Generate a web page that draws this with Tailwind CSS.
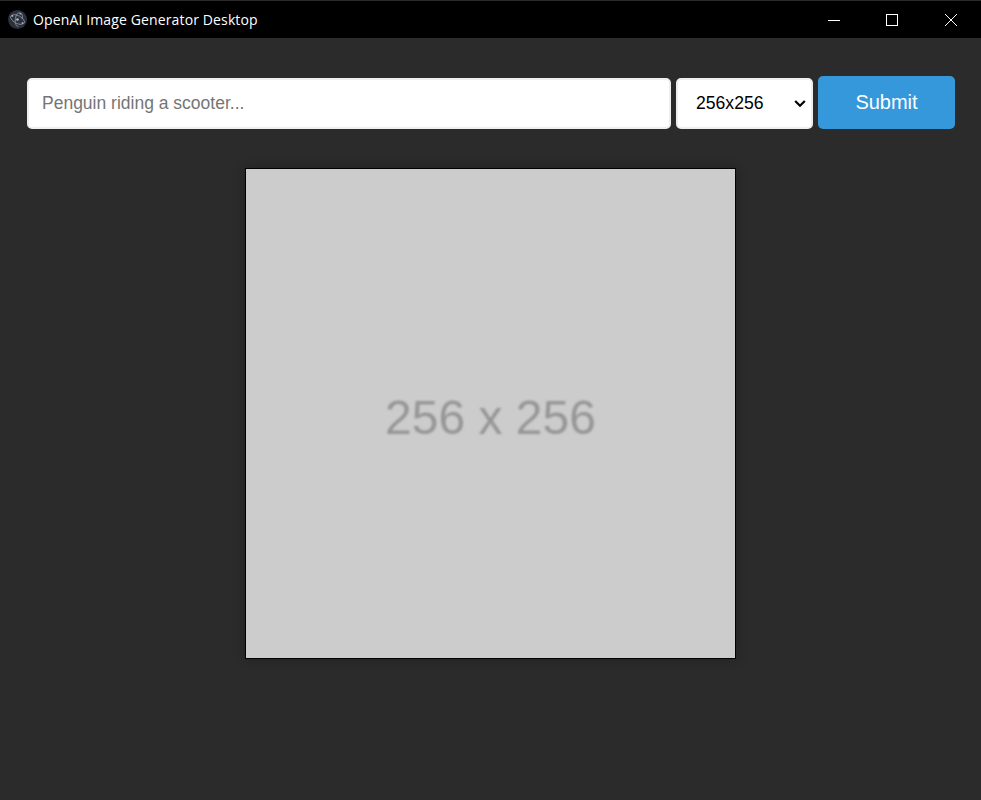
<!DOCTYPE html>
<html lang="en">
<head>
    <meta charset="UTF-8">
    <title>OpenAI Image Generator Desktop</title>
    <script src="https://cdn.jsdelivr.net/npm/@tailwindcss/browser@4"></script>
</head>
<body class="bg-[#2b2b2b] h-[800px] overflow-hidden font-['Liberation_Sans',sans-serif]">
    <!-- title bar -->
    <div class="h-[38px] bg-black border-t border-[#2b2b2b] flex items-center">
        <svg class="ml-[8px] mr-[6px] w-[19px] h-[19px]" viewBox="0 0 20 20" fill="none">
            <circle cx="10" cy="10" r="10" fill="#2b303b"/>
            <g stroke="#8d98a6" stroke-width="0.9">
                <path d="M5.2 6.2C3.2 5.9 2.2 6.4 2.6 7.8C3.2 10 6.5 13.4 10.4 14.6C13.6 15.6 16 15.2 15.9 13.7"/>
                <path d="M14.8 13.8C16.8 14.1 17.8 13.6 17.4 12.2C16.8 10 13.5 6.6 9.6 5.4C6.4 4.4 4 4.8 4.1 6.3"/>
                <path d="M13.6 4.7C12.9 3.2 12 2.4 11 2.9C9 3.9 7.4 8 7.6 12C7.8 15.6 9.2 17.8 10.9 17"/>
                <path d="M15 9.5C15.5 6.5 15 4 13.6 3.6"/>
            </g>
            <circle cx="10" cy="10" r="1.4" fill="#aeb6c2"/>
            <circle cx="4.6" cy="6.2" r="1" fill="#aeb6c2"/>
            <circle cx="15.2" cy="13.8" r="1" fill="#aeb6c2"/>
            <circle cx="13" cy="3.8" r="1" fill="#aeb6c2"/>
        </svg>
        <span class="text-white text-[14px] font-['Open_Sans',sans-serif] tracking-[0.13px]">OpenAI Image Generator Desktop</span>
        <div class="ml-auto flex h-full">
            <div class="w-[58px] flex items-center justify-center">
                <svg class="w-[12px] h-[12px]" viewBox="0 0 12 12"><path d="M0 6.5H12" stroke="#fff" stroke-width="1"/></svg>
            </div>
            <div class="w-[58px] flex items-center justify-center">
                <svg class="w-[12px] h-[12px]" viewBox="0 0 12 12"><rect x="0.5" y="0.5" width="11" height="11" fill="none" stroke="#fff" stroke-width="1"/></svg>
            </div>
            <div class="w-[60px] flex items-center justify-center">
                <svg class="w-[12px] h-[12px]" viewBox="0 0 12 12"><path d="M0 0L12 12M12 0L0 12" stroke="#fff" stroke-width="1"/></svg>
            </div>
        </div>
    </div>

    <!-- form -->
    <div class="flex items-end gap-[5px] pl-[27px] pr-[26px] pt-[38px]">
        <input type="text" placeholder="Penguin riding a scooter..." class="w-[644px] h-[51px] px-[13px] pb-[1px] bg-white border-2 border-[#eeeeee] rounded-[5px] text-[17.5px] text-black placeholder:text-[#757575]">
        <div class="relative w-[137px] h-[51px] bg-white border-2 border-[#eeeeee] rounded-[5px] flex items-center pl-[18px] text-[17.6px] text-black">
            256x256
            <svg class="absolute right-[5px] top-[19px] w-[12px] h-[10px]" viewBox="0 0 12 10" fill="none"><path d="M1.2 2L6 6.8L10.8 2" stroke="#000" stroke-width="2.2"/></svg>
        </div>
        <button class="w-[137px] h-[53px] pb-[2px] bg-[#3498db] rounded-[5px] text-white text-[20px]">Submit</button>
    </div>

    <!-- image -->
    <div class="flex justify-center pt-[39px]">
        <div class="w-[491px] h-[491px] bg-[#cccccc] border border-black shadow-[0_0_10px_rgba(0,0,0,0.25)] flex items-center justify-center">
            <span class="text-[#969696] text-[48px] blur-[0.8px] mt-[9px]">256 x 256</span>
        </div>
    </div>
</body>
</html>
